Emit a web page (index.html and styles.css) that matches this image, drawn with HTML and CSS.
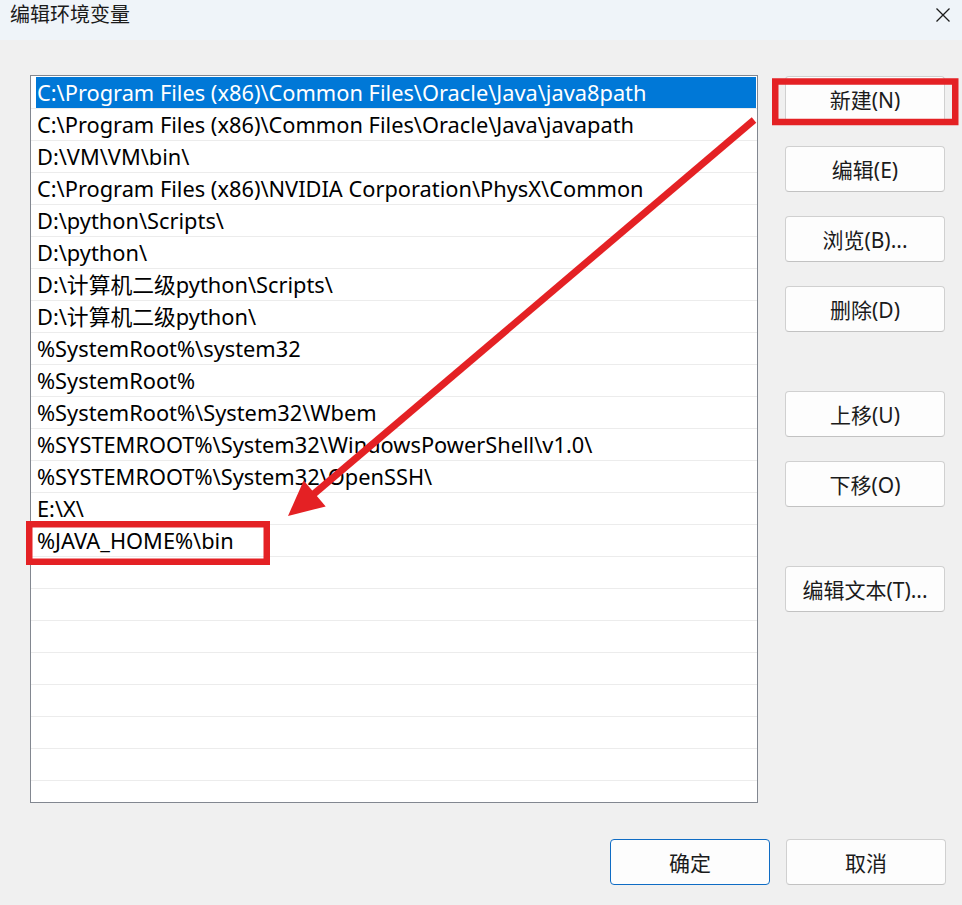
FILE: index.html
```html
<!DOCTYPE html>
<html lang="zh-CN">
<head>
<meta charset="utf-8">
<title>编辑环境变量</title>
<link rel="stylesheet" href="styles.css">
</head>
<body>
<div class="window">
  <div class="titlebar">
    <span class="title">编辑环境变量</span>
    <svg class="close" width="16" height="16" viewBox="0 0 16 16"><path d="M1.5 1.5 L14.5 14.5 M14.5 1.5 L1.5 14.5" stroke="#1b1b1b" stroke-width="1.3" fill="none"/></svg>
  </div>
  <div class="content">
    <div class="main">
      <div class="list">
        <div class="row"><span class="cell selected">C:\Program Files (x86)\Common Files\Oracle\Java\java8path</span></div>
        <div class="row"><span class="cell">C:\Program Files (x86)\Common Files\Oracle\Java\javapath</span></div>
        <div class="row"><span class="cell">D:\VM\VM\bin\</span></div>
        <div class="row"><span class="cell">C:\Program Files (x86)\NVIDIA Corporation\PhysX\Common</span></div>
        <div class="row"><span class="cell">D:\python\Scripts\</span></div>
        <div class="row"><span class="cell">D:\python\</span></div>
        <div class="row"><span class="cell">D:\计算机二级python\Scripts\</span></div>
        <div class="row"><span class="cell">D:\计算机二级python\</span></div>
        <div class="row"><span class="cell">%SystemRoot%\system32</span></div>
        <div class="row"><span class="cell">%SystemRoot%</span></div>
        <div class="row"><span class="cell">%SystemRoot%\System32\Wbem</span></div>
        <div class="row"><span class="cell">%SYSTEMROOT%\System32\WindowsPowerShell\v1.0\</span></div>
        <div class="row"><span class="cell">%SYSTEMROOT%\System32\OpenSSH\</span></div>
        <div class="row"><span class="cell">E:\X\</span></div>
        <div class="row"><span class="cell">%JAVA_HOME%\bin</span></div>
        <div class="row"><span class="cell"></span></div>
        <div class="row"><span class="cell"></span></div>
        <div class="row"><span class="cell"></span></div>
        <div class="row"><span class="cell"></span></div>
        <div class="row"><span class="cell"></span></div>
        <div class="row"><span class="cell"></span></div>
        <div class="row"><span class="cell"></span></div>
        <div class="row"><span class="cell"></span></div>
      </div>
      <div class="side">
        <div class="group">
          <button class="btn">新建(N)</button>
          <button class="btn">编辑(E)</button>
          <button class="btn">浏览(B)...</button>
          <button class="btn">删除(D)</button>
        </div>
        <div class="group">
          <button class="btn">上移(U)</button>
          <button class="btn">下移(O)</button>
        </div>
        <div class="group">
          <button class="btn">编辑文本(T)...</button>
        </div>
      </div>
    </div>
    <div class="footer">
      <button class="btn default">确定</button>
      <button class="btn">取消</button>
    </div>
  </div>
</div>
<svg class="annot" width="962" height="905" viewBox="0 0 962 905">
  <rect x="775.25" y="81.5" width="180" height="40.5" fill="none" stroke="#e42124" stroke-width="6.5"/>
  <rect x="29.25" y="524.25" width="237.5" height="37.5" fill="none" stroke="#e42124" stroke-width="6.5"/>
  <line x1="754" y1="120" x2="312" y2="495.5" stroke="#e42124" stroke-width="7"/>
  <polygon points="288,516 325.7,506.4 303.7,480.4" fill="#e42124"/>
</svg>
</body>
</html>
```

FILE: styles.css
```css
* { box-sizing: border-box; }
html, body { margin: 0; padding: 0; }
body {
  width: 962px;
  height: 905px;
  overflow: hidden;
  background: #f0f0f0;
  font-family: "Noto Sans", "Noto Sans CJK SC", sans-serif;
  color: #000;
  position: relative;
}
.window { width: 962px; height: 905px; }
.titlebar {
  height: 40px;
  background: #eff4f9;
  display: flex;
  align-items: flex-start;
  justify-content: space-between;
  padding: 0 11px 0 10px;
}
.title {
  font-family: "Noto Sans CJK SC", sans-serif;
  font-size: 20px;
  line-height: 28px;
  color: #1b1b1b;
}
.close { margin-top: 7px; }
.content { padding: 35px 16px 0 30px; }
.main { display: flex; gap: 27px; }
.list {
  width: 728px;
  height: 728px;
  border: 1px solid #828790;
  background: #fff;
  padding-top: 1px;
  overflow: hidden;
  flex: none;
}
.row {
  height: 32px;
  border-bottom: 1px solid #ececec;
  padding-left: 5px;
  padding-right: 1px;
}
.cell {
  display: block;
  height: 31px;
  line-height: 31px;
  padding-left: 1px;
  font-size: 21.8px;
  white-space: nowrap;
}
.cell.selected { background: #0078d7; color: #fff; }
.side {
  display: flex;
  flex-direction: column;
  gap: 59px;
  padding-top: 1px;
}
.group { display: flex; flex-direction: column; gap: 24px; }
.btn {
  width: 160px;
  height: 46px;
  background: #fdfdfd;
  border: 1px solid #d0d0d0;
  border-bottom-color: #c2c2c2;
  border-radius: 4px;
  font-family: "Noto Sans", "Noto Sans CJK SC", sans-serif;
  font-size: 21px;
  color: #1b1b1b;
  padding: 0;
  margin: 0;
}
.btn.default { border: 1px solid #0f6cc4; }
.footer {
  display: flex;
  justify-content: flex-end;
  gap: 16px;
  margin-top: 36px;
}
.annot { position: absolute; left: 0; top: 0; pointer-events: none; }
```
